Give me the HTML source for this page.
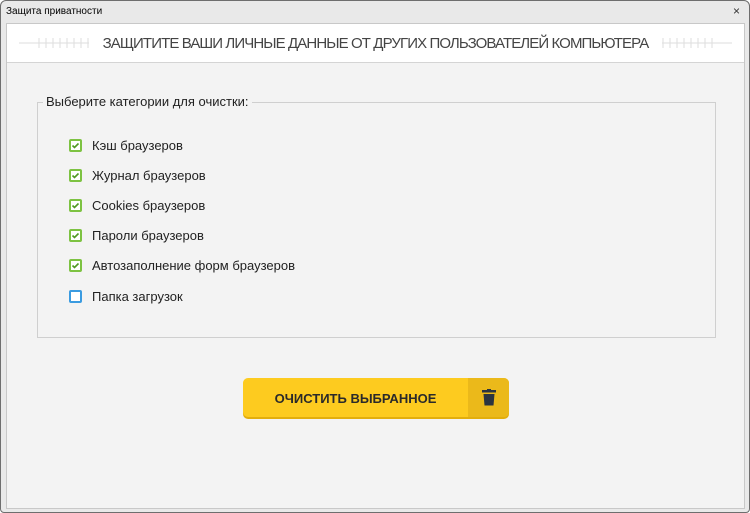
<!DOCTYPE html>
<html><head><meta charset="utf-8"><style>
body{margin:0;width:750px;height:513px;background:#fff;font-family:"Liberation Sans",sans-serif;overflow:hidden}
.win{position:absolute;left:0;top:0;width:748px;height:511px;border:1px solid #6e6e6e;border-radius:6px 6px 4px 4px;background:#e9e9e9}
.title{position:absolute;left:5px;top:5px;font-size:10px;color:#000}
.x{position:absolute;right:9px;top:3px;font-size:12px;color:#333}
.inner{position:absolute;left:5px;top:22px;width:737px;height:484px;border:1px solid #c8c8c8;background:#f3f3f3}
.head{position:absolute;left:0;top:0;width:737px;height:38px;background:#fff;border-bottom:1px solid #d4d4d4}
.head .t{position:absolute;left:0;width:100%;top:11px;text-align:center;font-size:15px;color:#444;letter-spacing:-0.9px}
.fs{position:absolute;left:30px;top:78px;width:677px;height:234px;border:1px solid #cfcfcf}
.lg{position:absolute;left:5px;top:-9px;background:#f3f3f3;padding:0 3px;font-size:13px;color:#222}
.row{position:absolute;left:31px;font-size:13px;color:#222}
.cb{position:absolute;left:0;top:0;width:9px;height:9px;border:2px solid #7dc242;border-radius:2px;background:#fff}
.cb.off{border-color:#3a9be0}
.cb svg{position:absolute;left:0;top:0}
.row span{position:absolute;left:23px;top:-1px;white-space:nowrap}
.btn{position:absolute;left:236px;top:354px;width:266px;height:39px;background:#fdcb1f;border-radius:5px;box-shadow:0 2px 0 #e3ae0c}
.btn .l{position:absolute;left:0;width:225px;top:13px;text-align:center;font-weight:bold;font-size:13px;color:#2a2a2a}
.btn .r{position:absolute;right:0;top:0;width:41px;height:39px;background:#ebb91a;border-radius:0 5px 5px 0}
</style></head><body>
<div class="win">
<div class="title">Защита приватности</div><div class="x">×</div>
<div class="inner">
<div class="head">
<svg style="position:absolute;left:12px;top:14px" width="70" height="10"><line x1="0" y1="5" x2="70" y2="5" stroke="#ddd"/><g stroke="#ddd"><line x1="20" y1="0" x2="20" y2="10"/><line x1="27" y1="0" x2="27" y2="10"/><line x1="34" y1="0" x2="34" y2="10"/><line x1="41" y1="0" x2="41" y2="10"/><line x1="48" y1="0" x2="48" y2="10"/><line x1="55" y1="0" x2="55" y2="10"/><line x1="62" y1="0" x2="62" y2="10"/><line x1="69" y1="0" x2="69" y2="10"/></g></svg>
<svg style="position:absolute;left:655px;top:14px" width="70" height="10"><line x1="0" y1="5" x2="70" y2="5" stroke="#ddd"/><g stroke="#ddd"><line x1="1" y1="0" x2="1" y2="10"/><line x1="8" y1="0" x2="8" y2="10"/><line x1="15" y1="0" x2="15" y2="10"/><line x1="22" y1="0" x2="22" y2="10"/><line x1="29" y1="0" x2="29" y2="10"/><line x1="36" y1="0" x2="36" y2="10"/><line x1="43" y1="0" x2="43" y2="10"/><line x1="50" y1="0" x2="50" y2="10"/></g></svg>
<div class="t">ЗАЩИТИТЕ ВАШИ ЛИЧНЫЕ ДАННЫЕ ОТ ДРУГИХ ПОЛЬЗОВАТЕЛЕЙ КОМПЬЮТЕРА</div></div>
<div class="fs"><div class="lg">Выберите категории для очистки:</div>
<div class="row" style="top:36px"><div class="cb"><svg width="9" height="9"><path d="M1.5 4.5l2 2 4-4" stroke="#4f9a22" stroke-width="1.6" fill="none"/></svg></div><span>Кэш браузеров</span></div>
<div class="row" style="top:66px"><div class="cb"><svg width="9" height="9"><path d="M1.5 4.5l2 2 4-4" stroke="#4f9a22" stroke-width="1.6" fill="none"/></svg></div><span>Журнал браузеров</span></div>
<div class="row" style="top:96px"><div class="cb"><svg width="9" height="9"><path d="M1.5 4.5l2 2 4-4" stroke="#4f9a22" stroke-width="1.6" fill="none"/></svg></div><span>Cookies браузеров</span></div>
<div class="row" style="top:126px"><div class="cb"><svg width="9" height="9"><path d="M1.5 4.5l2 2 4-4" stroke="#4f9a22" stroke-width="1.6" fill="none"/></svg></div><span>Пароли браузеров</span></div>
<div class="row" style="top:156px"><div class="cb"><svg width="9" height="9"><path d="M1.5 4.5l2 2 4-4" stroke="#4f9a22" stroke-width="1.6" fill="none"/></svg></div><span>Автозаполнение форм браузеров</span></div>
<div class="row" style="top:187px"><div class="cb off"></div><span>Папка загрузок</span></div>
</div>
<div class="btn"><div class="l">ОЧИСТИТЬ ВЫБРАННОЕ</div><div class="r"><svg style="position:absolute;left:14px;top:11px" width="14" height="17"><rect x="0" y="1" width="14" height="2.5" fill="#2b3440"/><rect x="5" y="0" width="4" height="2" fill="#2b3440"/><path d="M1.5 5h11l-1 11.5h-9z" fill="#2b3440"/></svg></div></div>
</div></div>
</body></html>
